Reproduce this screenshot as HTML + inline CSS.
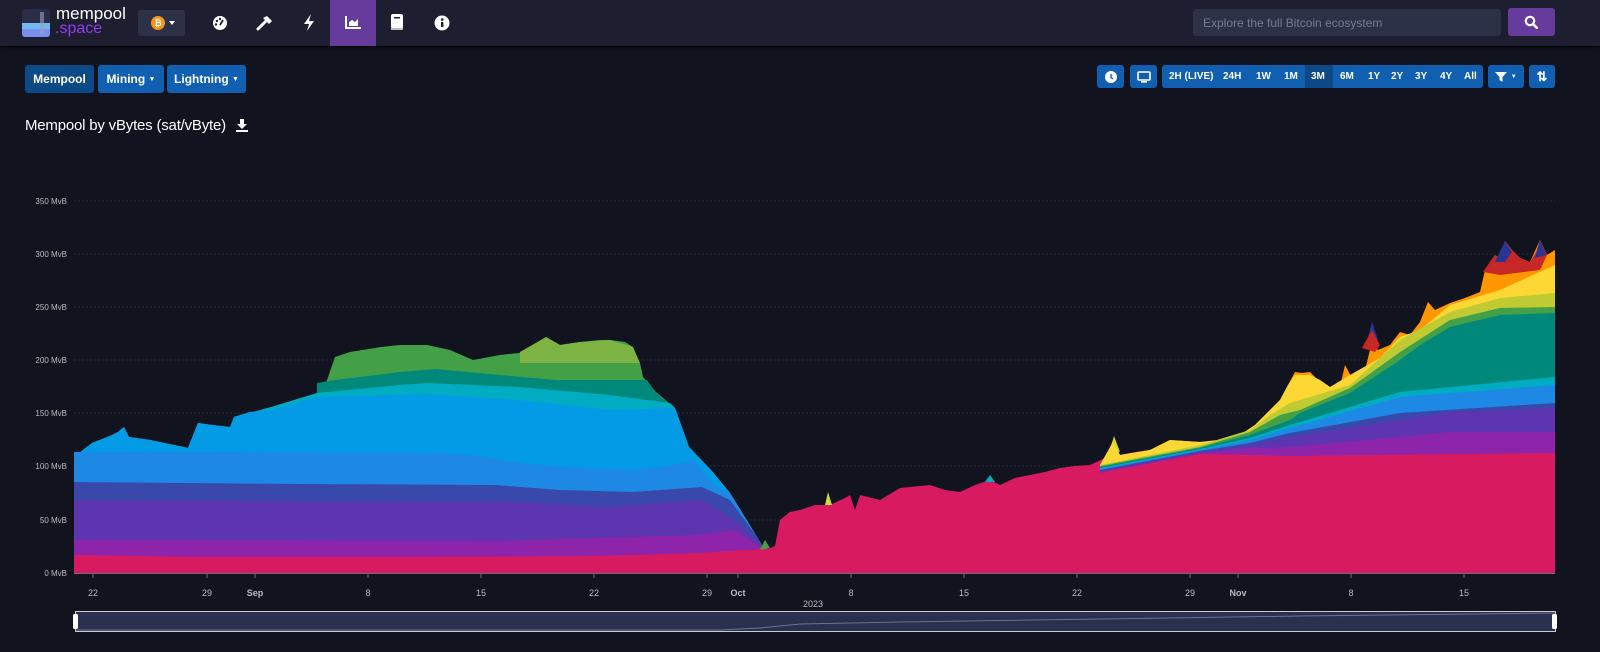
<!DOCTYPE html>
<html><head><meta charset="utf-8"><style>
*{margin:0;padding:0;box-sizing:border-box}
body{width:1600px;height:652px;background:#11131f;font-family:"Liberation Sans",sans-serif;color:#fff;overflow:hidden;position:relative}
.hdr{position:absolute;left:0;top:0;width:1600px;height:46px;background:#1d1f31;box-shadow:0 1px 3px #000}
.btn{position:absolute;background:#105fb0;color:#fff;font-size:12px;font-weight:bold;border-radius:3px;display:flex;align-items:center;justify-content:center}
.rng{position:absolute;left:1162px;top:65px;width:321px;height:23px;background:#105fb0;border-radius:3px;font-size:10px;font-weight:bold}
.rng span{position:absolute;top:6px;white-space:nowrap}
.yl{position:absolute;right:1533px;font-size:8px;color:#bbb;text-align:right;white-space:nowrap}
.xl{position:absolute;top:588px;font-size:9px;color:#bbb;transform:translateX(-50%)}
</style></head><body>
<div class="hdr">
 <svg style="position:absolute;left:22px;top:9px" width="28" height="28"><rect x="0" y="0" width="28" height="28" rx="3" fill="#2a2d45"/><rect x="0" y="14" width="28" height="14" rx="3" fill="#7a8ff0"/><rect x="0" y="14" width="28" height="6" fill="#6fb8f0"/><rect x="18" y="3" width="4" height="22" fill="#9aa0c0" opacity=".6"/></svg>
 <div style="position:absolute;left:56px;top:6px;font-size:17px;line-height:16px;color:#fff">mempool</div>
 <div style="position:absolute;left:55px;top:21px;font-size:16px;line-height:16px;color:#9339f4">.space</div>
 <div style="position:absolute;left:138px;top:10px;width:47px;height:26px;background:#2d3148;border-radius:3px"></div>
 <div style="position:absolute;left:151px;top:16px;width:14px;height:14px;border-radius:50%;background:#f7931a;font-size:9px;font-weight:bold;text-align:center;line-height:14px">₿</div>
 <div style="position:absolute;left:169px;top:21px;border:3px solid transparent;border-top:4px solid #fff"></div>
 <svg style="position:absolute;left:212px;top:15px" width="16" height="16"><circle cx="8" cy="8" r="7" fill="#fff"/><circle cx="5" cy="6" r="1.2" fill="#1d1f31"/><circle cx="8" cy="4" r="1.2" fill="#1d1f31"/><circle cx="4" cy="9.5" r="1.2" fill="#1d1f31"/><path d="M8 10 L11 5" stroke="#1d1f31" stroke-width="1.8"/></svg>
 <svg style="position:absolute;left:256px;top:15px" width="17" height="16"><path d="M2 14 L10 6" stroke="#fff" stroke-width="3" stroke-linecap="round"/><path d="M7 3 L11 1 L16 6 L13 9 Z" fill="#fff"/></svg>
 <svg style="position:absolute;left:302px;top:14px" width="14" height="17"><path d="M9 0 L2 10 L7 10 L5 17 L12 7 L7 7 Z" fill="#fff"/></svg>
 <div style="position:absolute;left:330px;top:0;width:46px;height:46px;background:#653b9c"></div>
 <svg style="position:absolute;left:345px;top:16px" width="16" height="13"><path d="M1 0 V12 H16" stroke="#fff" stroke-width="2" fill="none"/><path d="M4 10 V6 L7 4 L10 6 L13 3 V10 Z" fill="#fff"/></svg>
 <svg style="position:absolute;left:390px;top:14px" width="14" height="17"><rect x="1" y="0" width="12" height="14" rx="2" fill="#fff"/><rect x="1" y="13" width="12" height="3" fill="#fff" opacity=".7"/><rect x="4" y="3" width="6" height="1.5" fill="#1d1f31"/></svg>
 <svg style="position:absolute;left:434px;top:15px" width="16" height="16"><circle cx="8" cy="8" r="7.5" fill="#fff"/><rect x="7" y="7" width="2.4" height="5" fill="#1d1f31"/><circle cx="8.2" cy="4.6" r="1.3" fill="#1d1f31"/></svg>
 <div style="position:absolute;left:1193px;top:9px;width:308px;height:27px;background:#2d3148;border-radius:3px;font-size:12px;color:#777a90;padding:7px 10px">Explore the full Bitcoin ecosystem</div>
 <div style="position:absolute;left:1508px;top:8px;width:47px;height:28px;background:#653b9c;border-radius:3px"></div>
 <svg style="position:absolute;left:1524px;top:15px" width="14" height="14"><circle cx="6" cy="6" r="4.2" stroke="#fff" stroke-width="2.2" fill="none"/><path d="M9 9 L13 13" stroke="#fff" stroke-width="2.5" stroke-linecap="round"/></svg>
</div>

<div class="btn" style="left:25px;top:65px;width:69px;height:28px;background:#0c4a87">Mempool</div>
<div class="btn" style="left:98px;top:65px;width:66px;height:28px">Mining&nbsp;<span style="font-size:7px">▼</span></div>
<div class="btn" style="left:167px;top:65px;width:79px;height:28px">Lightning&nbsp;<span style="font-size:7px">▼</span></div>

<div class="btn" style="left:1097px;top:65px;width:27px;height:23px"><svg width="12" height="12"><circle cx="6" cy="6" r="6" fill="#fff"/><path d="M6 3 V6.5 L8 8" stroke="#105fb0" stroke-width="1.4" fill="none"/></svg></div>
<div class="btn" style="left:1130px;top:65px;width:27px;height:23px"><svg width="14" height="12"><rect x="1" y="1" width="12" height="8" rx="1" stroke="#fff" stroke-width="1.6" fill="none"/><rect x="4" y="10" width="6" height="1.6" fill="#fff"/></svg></div>
<div class="rng"><div style="position:absolute;left:143px;top:0;width:28px;height:23px;background:#0c4a87"></div>
<span style="left:7px">2H (LIVE)</span><span style="left:61px">24H</span><span style="left:94px">1W</span><span style="left:122px">1M</span><span style="left:149px">3M</span><span style="left:178px">6M</span><span style="left:206px">1Y</span><span style="left:229px">2Y</span><span style="left:253px">3Y</span><span style="left:278px">4Y</span><span style="left:302px">All</span></div>
<div class="btn" style="left:1488px;top:65px;width:36px;height:23px"><svg width="12" height="10"><path d="M0 0 H12 L7.5 5 V10 L4.5 8 V5 Z" fill="#fff"/></svg>&nbsp;<span style="font-size:6px">▼</span></div>
<div class="btn" style="left:1529px;top:65px;width:26px;height:23px;font-size:13px">⇅</div>

<div style="position:absolute;left:25px;top:117px;font-size:15px;letter-spacing:-0.2px;color:#fff;white-space:nowrap">Mempool by vBytes (sat/vByte)</div>
<svg style="position:absolute;left:236px;top:119px" width="12" height="13"><path d="M4 0 H8 V5 H11 L6 10 L1 5 H4 Z" fill="#fff"/><rect x="0" y="11" width="12" height="2" fill="#fff"/></svg>

<div class="yl" style="top:197px">350 MvB</div><div class="yl" style="top:250px">300 MvB</div><div class="yl" style="top:303px">250 MvB</div><div class="yl" style="top:356px">200 MvB</div><div class="yl" style="top:409px">150 MvB</div><div class="yl" style="top:462px">100 MvB</div><div class="yl" style="top:516px">50 MvB</div><div class="yl" style="top:569px">0 MvB</div>

<svg style="position:absolute;left:0;top:0" width="1600" height="652">
<g stroke="#262a3a" stroke-width="1" stroke-dasharray="2,2"><line x1="74" x2="1555" y1="201" y2="201"/><line x1="74" x2="1555" y1="254" y2="254"/><line x1="74" x2="1555" y1="307" y2="307"/><line x1="74" x2="1555" y1="360" y2="360"/><line x1="74" x2="1555" y1="413" y2="413"/><line x1="74" x2="1555" y1="466" y2="466"/><line x1="74" x2="1555" y1="520" y2="520"/></g>
<polygon fill="#43a047" points="74,457 92,443 110,436 118,432 124,427 129,437 150,440 188,448 198,423 212,425 230,427 234,417 250,412 271,410 300,402 317,397 326,383 335,357 350,352 381,347 400,345 427,345 450,350 473,360 500,355 519,353 535,345 546,337 560,345 580,342 600,340 610,340 625,342 633,347 643,377 656,392 675,408 689,447 711,470 730,493 757,537 765,550 765,573 74,573"/>
<polygon fill="#7cb342" points="520,352 546,337 560,345 580,342 610,340 633,347 640,363 520,363"/>
<polygon fill="#43a047" points="500,363 640,363 643,377 500,377"/>
<polygon fill="#00897b" points="74,457 92,443 110,436 118,432 124,427 129,437 150,440 188,448 198,423 212,425 230,427 234,417 250,412 271,410 300,402 317,397 317,383 335,380 400,372 436,369 500,375 556,380 647,380 656,393 675,408 689,447 711,470 730,493 757,537 765,550 765,573 74,573"/>
<polygon fill="#00acc1" points="74,457 92,443 110,436 118,432 124,427 129,437 150,440 188,448 198,423 212,425 230,427 234,417 271,407 317,393 400,385 427,383 519,387 610,395 670,403 675,408 689,447 711,470 730,493 757,537 765,550 765,573 74,573"/>
<polygon fill="#039be5" points="74,457 92,443 110,436 118,432 124,427 129,437 150,440 188,448 198,423 212,425 230,427 234,417 250,412 271,410 300,402 317,397 400,395 427,394 519,400 610,410 675,408 689,447 711,470 730,493 757,537 765,550 765,573 74,573"/>
<polygon fill="#1e88e5" points="74,452 200,452 436,453 480,456 519,463 580,468 633,470 670,466 693,460 716,487 730,493 757,537 765,550 765,573 74,573"/>
<polygon fill="#3949ab" points="74,482 300,484 496,485 560,490 633,492 702,487 730,500 757,537 765,550 765,573 74,573"/>
<polygon fill="#5e35b1" points="74,500 300,501 500,501 610,507 702,500 735,520 757,540 765,550 765,573 74,573"/>
<polygon fill="#8e24aa" points="74,540 500,541 600,538 698,535 735,530 757,545 765,550 765,573 74,573"/>
<polygon fill="#d81b60" points="74,555 200,557 400,557 600,556 700,553 745,550 757,550 763,545 768,549 775,546 780,520 790,512 800,510 815,505 830,505 845,498 850,495 855,510 860,495 880,500 900,488 930,485 945,490 960,492 975,485 990,480 1000,485 1015,478 1030,475 1045,472 1060,468 1075,466 1090,465 1105,458 1113,440 1120,455 1135,452 1150,450 1160,446 1170,440 1185,443 1200,442 1215,440 1230,446 1260,453 1555,453 1555,573 74,573"/>
<polygon fill="#43a047" points="760,550 765,540 770,548" />
<polygon fill="#cddc39" points="825,505 828,492 832,505"/>
<polygon fill="#00acc1" points="985,482 990,475 995,482"/>
<polygon fill="#cddc39" points="1110,450 1114,436 1120,452"/>
<polygon fill="#ff9800" points="1100,465 1113,442 1120,455 1150,450 1170,440 1200,442 1220,440 1240,435 1255,425 1270,410 1280,400 1288,385 1295,372 1302,373 1310,372 1318,380 1330,387 1340,387 1345,365 1352,378 1365,370 1372,342 1378,350 1390,345 1400,332 1410,335 1420,322 1428,302 1435,310 1450,303 1465,298 1480,292 1485,270 1490,262 1495,255 1500,258 1505,241 1512,250 1520,258 1530,262 1540,240 1547,255 1555,250 1555,573 1100,573"/>
<polygon fill="#c62828" points="1483,272 1490,262 1495,255 1500,258 1505,241 1512,250 1520,258 1530,262 1536,252 1540,240 1547,255 1540,270 1500,275"/>
<polygon fill="#283593" points="1495,262 1505,241 1512,252 1505,262"/><polygon fill="#283593" points="1535,258 1540,240 1546,255"/><polygon fill="#283593" points="1366,345 1372,322 1378,340"/>
<polygon fill="#c62828" points="1362,348 1372,330 1380,345 1375,352"/>
<polygon fill="#fdd835" points="1100,465 1113,442 1120,455 1150,450 1170,440 1200,442 1220,440 1240,435 1255,425 1270,410 1280,400 1288,385 1295,375 1310,375 1320,380 1330,387 1350,375 1380,358 1400,337 1420,330 1450,305 1480,296 1500,290 1555,265 1555,573 1100,573"/>
<polygon fill="#c0ca33" points="1100,465 1200,445 1250,430 1270,415 1290,403 1300,400 1350,385 1400,340 1450,312 1500,298 1555,293 1555,573 1100,573"/>
<polygon fill="#43a047" points="1100,466 1200,447 1250,432 1280,415 1300,410 1350,388 1400,352 1450,320 1500,308 1555,307 1555,573 1100,573"/>
<polygon fill="#00897b" points="1100,467 1200,448 1250,435 1290,420 1300,413 1350,393 1400,360 1420,345 1450,327 1500,315 1555,313 1555,573 1100,573"/>
<polygon fill="#00acc1" points="1100,468 1200,449 1250,438 1290,425 1400,392 1555,377 1555,573 1100,573"/>
<polygon fill="#1e88e5" points="1100,469 1200,450 1250,440 1290,428 1400,397 1555,385 1555,573 1100,573"/>
<polygon fill="#3949ab" points="1100,470 1200,451 1250,443 1290,433 1400,413 1555,403 1555,573 1100,573"/>
<polygon fill="#5e35b1" points="1100,471 1200,452 1250,445 1290,437 1400,420 1450,412 1555,408 1555,573 1100,573"/>
<polygon fill="#8e24aa" points="1100,472 1200,453 1250,448 1290,447 1400,437 1450,432 1555,432 1555,573 1100,573"/>
<polygon fill="#d81b60" points="1100,473 1200,454 1250,455 1290,456 1555,453 1555,573 1100,573"/>
<line x1="74" y1="573.5" x2="1555" y2="573.5" stroke="#6e7079"/>
<g stroke="#6e7079"><line x1="93" x2="93" y1="574" y2="578"/><line x1="207" x2="207" y1="574" y2="578"/><line x1="255" x2="255" y1="574" y2="578"/><line x1="368" x2="368" y1="574" y2="578"/><line x1="481" x2="481" y1="574" y2="578"/><line x1="594" x2="594" y1="574" y2="578"/><line x1="707" x2="707" y1="574" y2="578"/><line x1="738" x2="738" y1="574" y2="578"/><line x1="851" x2="851" y1="574" y2="578"/><line x1="964" x2="964" y1="574" y2="578"/><line x1="1077" x2="1077" y1="574" y2="578"/><line x1="1190" x2="1190" y1="574" y2="578"/><line x1="1238" x2="1238" y1="574" y2="578"/><line x1="1351" x2="1351" y1="574" y2="578"/><line x1="1464" x2="1464" y1="574" y2="578"/></g>
<rect x="75.5" y="611.5" width="1480" height="20" fill="#2a3150" stroke="#c8cad6"/>
<path d="M76 630 L720 630 L760 628 L800 624 L900 622 L1100 619 L1300 616 L1555 613" stroke="#6d7390" fill="none"/>
<rect x="73" y="614" width="5" height="15" rx="1.5" fill="#fff"/><rect x="1552" y="614" width="5" height="15" rx="1.5" fill="#fff"/>
</svg>
<div class="xl" style="left:93px">22</div><div class="xl" style="left:207px">29</div><div class="xl" style="left:255px;font-weight:bold">Sep</div><div class="xl" style="left:368px">8</div><div class="xl" style="left:481px">15</div><div class="xl" style="left:594px">22</div><div class="xl" style="left:707px">29</div><div class="xl" style="left:738px;font-weight:bold">Oct</div><div class="xl" style="left:851px">8</div><div class="xl" style="left:964px">15</div><div class="xl" style="left:1077px">22</div><div class="xl" style="left:1190px">29</div><div class="xl" style="left:1238px;font-weight:bold">Nov</div><div class="xl" style="left:1351px">8</div><div class="xl" style="left:1464px">15</div>
<div class="xl" style="left:813px;top:599px">2023</div>
</body></html>
